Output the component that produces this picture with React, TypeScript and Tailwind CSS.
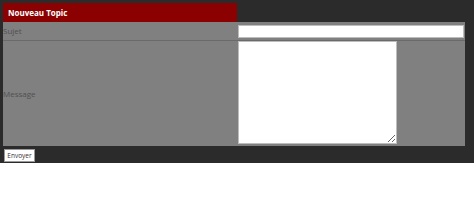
export default function App() {
  return (
    <div className="bg-[#2b2b2b] h-[163px] pt-[3px] pl-[3px] font-['Open_Sans',sans-serif]">
      <div className="w-[462px]">
        <div className="w-[234px] h-[19px] bg-[#8b0000] flex items-center pl-[5px] text-[8px] font-bold text-white">
          Nouveau Topic
        </div>
        <div className="grid grid-cols-[235px_227px] bg-[#808080] border-b border-[#6a6a6a]">
          <div className="h-[18px] flex items-center text-[8px] text-[#505050]">Sujet</div>
          <div className="flex items-center">
            <input className="w-[226px] h-[13px] bg-white border border-[#bdbdbd]" />
          </div>
        </div>
        <div className="grid grid-cols-[235px_227px] bg-[#808080] h-[105px]">
          <div className="flex items-center text-[8px] text-[#505050]">Message</div>
          <div>
            <textarea className="block w-[159px] h-[103px] bg-white border border-[#bdbdbd] resize" />
          </div>
        </div>
      </div>
      <div className="pt-[3px] pl-[1px]">
        <button className="h-[13px] w-[31px] px-0 bg-white border border-[#9a9a9a] text-[6.5px] text-[#333] flex items-center justify-center">
          Envoyer
        </button>
      </div>
    </div>
  );
}
